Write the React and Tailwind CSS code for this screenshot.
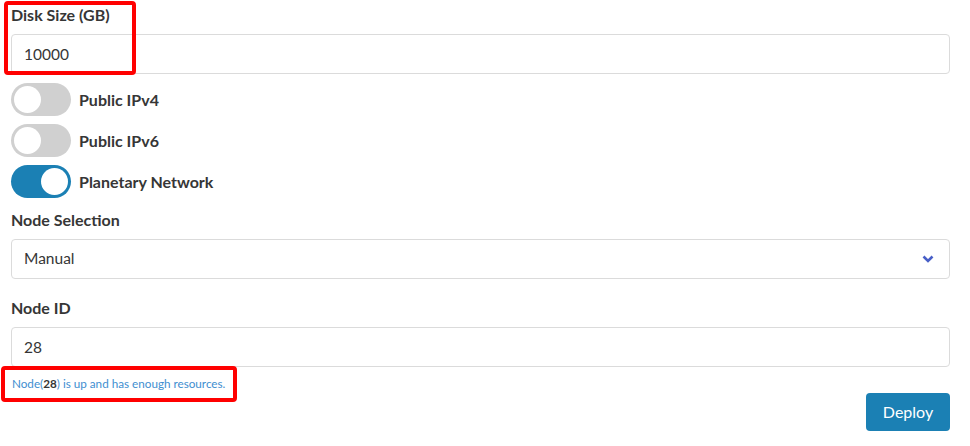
import React, { useState } from "react";

const Toggle = ({ label, on, onChange }) => (
  <div className="flex items-center gap-[8px]">
    <button
      type="button"
      onClick={onChange}
      className={`relative w-[60px] h-[33px] rounded-full ${on ? "bg-[#1b80b4]" : "bg-[#d0d0d0]"}`}
    >
      <span
        className={`absolute top-[3px] w-[27px] h-[27px] rounded-full bg-white ${on ? "left-[30px]" : "left-[3px]"}`}
      />
    </button>
    <span className="text-[16px] font-bold text-[#363636] leading-[20px]">{label}</span>
  </div>
);

const App = () => {
  const [disk, setDisk] = useState("10000");
  const [nodeId, setNodeId] = useState("28");
  const [ipv4, setIpv4] = useState(false);
  const [ipv6, setIpv6] = useState(false);
  const [planetary, setPlanetary] = useState(true);

  return (
    <div
      className="relative w-[970px] h-[446px] bg-white pl-[11px] pr-[20px] pt-[5px] text-[#363636]"
      style={{ fontFamily: "Lato, 'Open Sans', sans-serif" }}
    >
      <label className="block text-[16px] font-bold leading-[20px] mb-[9px]">Disk Size (GB)</label>
      <input
        type="text"
        value={disk}
        onChange={(e) => setDisk(e.target.value)}
        className="block w-full h-[40px] border border-[#dbdbdb] rounded-[4px] px-[12px] text-[15.5px] text-[#363636] outline-none"
      />

      <div className="flex flex-col gap-[8px] mt-[9px]">
        <Toggle label="Public IPv4" on={ipv4} onChange={() => setIpv4(!ipv4)} />
        <Toggle label="Public IPv6" on={ipv6} onChange={() => setIpv6(!ipv6)} />
        <Toggle label="Planetary Network" on={planetary} onChange={() => setPlanetary(!planetary)} />
      </div>

      <label className="block text-[16px] font-bold leading-[20px] mt-[12px] mb-[9px]">Node Selection</label>
      <div className="relative">
        <select className="block w-full h-[40px] appearance-none border border-[#dbdbdb] rounded-[4px] bg-white px-[12px] text-[15.5px] text-[#363636] outline-none">
          <option>Manual</option>
          <option>Automated</option>
        </select>
        <svg
          className="absolute right-[16px] top-[16px] pointer-events-none"
          width="12"
          height="8"
          viewBox="0 0 12 8"
        >
          <polyline points="1.5,1.5 6,6 10.5,1.5" fill="none" stroke="#485fc7" strokeWidth="2.6" />
        </svg>
      </div>

      <label className="block text-[16px] font-bold leading-[20px] mt-[19px] mb-[9px]">Node ID</label>
      <input
        type="text"
        value={nodeId}
        onChange={(e) => setNodeId(e.target.value)}
        className="block w-full h-[40px] border border-[#dbdbdb] rounded-[4px] px-[12px] text-[15.5px] text-[#363636] outline-none"
      />
      <p className="mt-[7px] text-[11.7px] leading-[18px] text-[#3e8ed0] pl-[1px]">
        Node(<span className="font-bold text-[#363636]">28</span>) is up and has enough resources.
      </p>

      <div className="flex justify-end mt-[1px]">
        <button className="w-[84px] h-[38px] rounded-[4px] bg-[#1b80b4] text-white text-[16px]">Deploy</button>
      </div>

      {/* annotation boxes */}
      <div className="absolute left-[4px] top-[1px] w-[132px] h-[74px] border-[4px] border-[#ff0000] rounded-[4px] pointer-events-none" />
      <div className="absolute left-[1px] top-[366px] w-[236px] h-[36px] border-[4px] border-[#ff0000] rounded-[4px] pointer-events-none" />
    </div>
  );
};

export default App;
